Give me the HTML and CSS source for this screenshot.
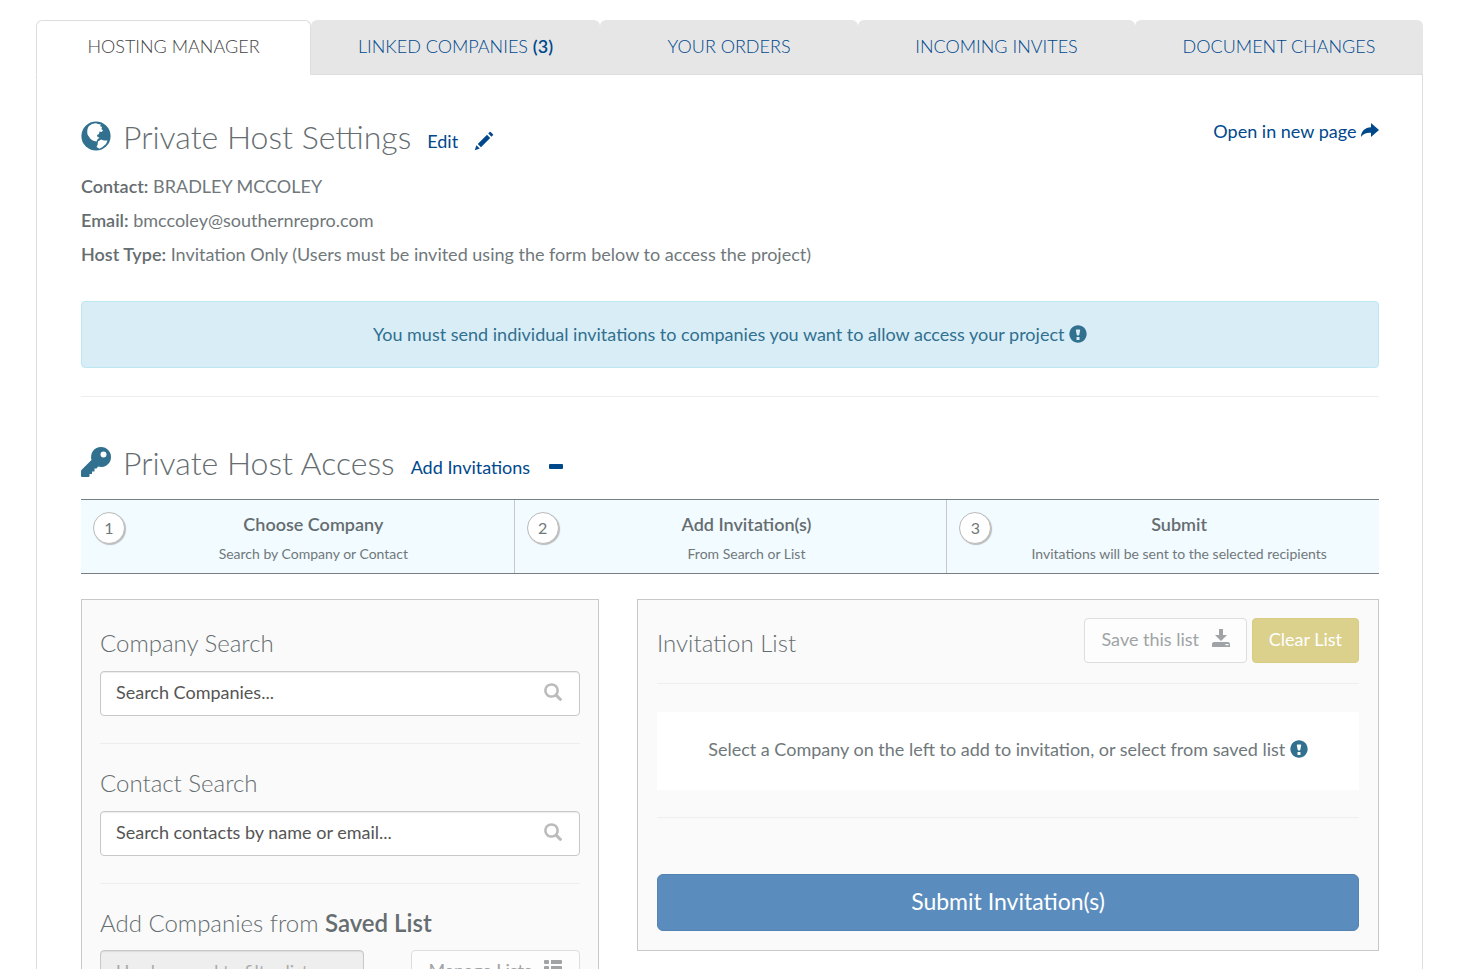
FILE: index.html
```html
<!DOCTYPE html>
<html lang="en">
<head>
    <title>Hosting Manager</title>
    <meta charset="UTF-8">
    <meta name="viewport" content="width=device-width, initial-scale=1.0">
    <link rel="stylesheet" href="styles.css">
</head>
<body>
    <svg class="sprite" aria-hidden="true">
        <symbol id="icon-search" viewBox="0 0 1200 1200">
            <path transform="matrix(1 0 0 -1 0 1200)" d="M500 1191q100 0 191 -39t156.5 -104.5t104.5 -156.5t39 -191l-1 -2l1 -5q0 -141 -78 -262l275 -274q23 -26 22.5 -44.5t-22.5 -42.5l-59 -58q-26 -20 -46.5 -20t-39.5 20l-275 274q-119 -77 -261 -77l-5 1l-2 -1q-100 0 -191 39t-156.5 104.5t-104.5 156.5t-39 191t39 191t104.5 156.5t156.5 104.5t191 39zM500 1022q-88 0 -162 -43t-117 -117t-43 -162t43 -162t117 -117t162 -43t162 43t117 117t43 162t-43 162t-117 117t-162 43z"/>
        </symbol>
        <symbol id="icon-exclamation" viewBox="0 0 1200 1200">
            <path transform="matrix(1 0 0 -1 0 1200)" d="M600 1177q117 0 224 -45.5t184.5 -123t123 -184.5t45.5 -224t-45.5 -224t-123 -184.5t-184.5 -123t-224 -45.5t-224 45.5t-184.5 123t-123 184.5t-45.5 224t45.5 224t123 184.5t184.5 123t224 45.5zM704 900h-208q-20 0 -32 -14.5t-8 -34.5l58 -302q4 -20 21.5 -34.5t37.5 -14.5h54q20 0 37.5 14.5t21.5 34.5l58 302q4 20 -8 34.5t-32 14.5zM675 400h-150q-10 0 -17.5 -7.5t-7.5 -17.5v-150q0 -10 7.5 -17.5t17.5 -7.5h150q10 0 17.5 7.5t7.5 17.5v150q0 10 -7.5 17.5t-17.5 7.5z"/>
        </symbol>
    </svg>

    <div class="container">
        <nav class="tabs">
            <a class="tab active" href="#hosting">HOSTING MANAGER</a>
            <a class="tab" href="#linked">LINKED COMPANIES <b>(3)</b></a>
            <a class="tab" href="#orders">YOUR ORDERS</a>
            <a class="tab" href="#invites">INCOMING INVITES</a>
            <a class="tab" href="#changes">DOCUMENT CHANGES</a>
        </nav>

        <main class="tab-content" id="hosting">
            <div class="section-head">
                <svg class="icon icon-lg" viewBox="0 0 30 30">
                    <circle cx="15" cy="15" r="14.6"/>
                    <path class="land" d="M8 5Q11 2 15 2.200L17 3L20 3.500L19 5L21 6L20.500 8L22 9.500L20.500 11L18.500 10.500L18 13L16 14L16.500 16L18.500 16.500L16.500 18.500L15.500 20.500Q10.500 20 8.500 16.500L6.500 13.500Q5.500 8 8 5ZM17 20.500L20 18.500L23 19.500L26.500 19.500L25 23L21.500 26L18.500 27.800L15.500 26L16.500 24Z"/>
                </svg>
                <h2>Private Host Settings</h2>
                <a class="head-link" href="#edit">Edit
                    <svg class="icon" viewBox="0 0 1200 1200"><path transform="matrix(1 0 0 -1 0 1200)" d="M1011 1210q19 0 33 -13l153 -153q13 -14 13 -33t-13 -33l-99 -92l-214 214l95 96q13 14 32 14zM1013 800l-615 -614l-214 214l614 614zM317 96l-333 -112l110 335z"/></svg>
                </a>
                <a class="open-link" href="#open">Open in new page
                    <svg class="icon" viewBox="0 0 18 18"><path d="M10 1L18 8L10 15V10.800C5.500 10.500 2.500 11.500 0 15C0 9 4 5.500 10 5.200Z"/></svg>
                </a>
            </div>

            <div class="details">
                <p><b>Contact:</b> BRADLEY MCCOLEY</p>
                <p><b>Email:</b> bmccoley@southernrepro.com</p>
                <p><b>Host Type:</b> Invitation Only (Users must be invited using the form below to access the project)</p>
            </div>

            <div class="alert">You must send individual invitations to companies you want to allow access your project
                <svg class="icon"><use href="#icon-exclamation"/></svg>
            </div>

            <hr class="divider">

            <div class="section-head access-head">
                <svg class="icon icon-lg" viewBox="0 0 30 30">
                    <path fill-rule="evenodd" d="M20 0A10 10 0 1 1 17.200 19.600L15.500 21.500H13.500V24.500H11V27H8.500V29Q8.500 30 7.500 30H1Q0 30 0 29V24.500Q0 23.500 0.700 22.800L10.500 13A10 10 0 0 1 20 0ZM22.500 4.500A3 3 0 1 0 22.500 10.500A3 3 0 1 0 22.500 4.500Z"/>
                </svg>
                <h2>Private Host Access</h2>
                <a class="head-link" href="#add">Add Invitations
                    <svg class="icon" viewBox="0 0 18 18"><rect x="2" y="6" width="14" height="5" rx="1"/></svg>
                </a>
            </div>

            <div class="steps">
                <div class="step">
                    <span class="step-number">1</span>
                    <div class="step-text">
                        <b>Choose Company</b>
                        <small>Search by Company or Contact</small>
                    </div>
                </div>
                <div class="step">
                    <span class="step-number">2</span>
                    <div class="step-text">
                        <b>Add Invitation(s)</b>
                        <small>From Search or List</small>
                    </div>
                </div>
                <div class="step">
                    <span class="step-number">3</span>
                    <div class="step-text">
                        <b>Submit</b>
                        <small>Invitations will be sent to the selected recipients</small>
                    </div>
                </div>
            </div>

            <div class="columns">
                <form class="panel search-panel">
                    <label class="panel-title" for="company-search">Company Search</label>
                    <div class="search-box">
                        <input id="company-search" type="text" placeholder="Search Companies...">
                        <svg class="icon"><use href="#icon-search"/></svg>
                    </div>
                    <hr>
                    <label class="panel-title" for="contact-search">Contact Search</label>
                    <div class="search-box">
                        <input id="contact-search" type="text" placeholder="Search contacts by name or email...">
                        <svg class="icon"><use href="#icon-search"/></svg>
                    </div>
                    <hr>
                    <label class="panel-title" for="list-filter">Add Companies from <b>Saved List</b></label>
                    <div class="list-row">
                        <input id="list-filter" type="text" placeholder="Use keyword to filter lists..." disabled>
                        <button class="btn" type="button" disabled>Manage Lists
                            <svg class="icon" viewBox="0 0 18 18"><path d="M1 0H4Q5 0 5 1V3Q5 4 4 4H1Q0 4 0 3V1Q0 0 1 0ZM7 0H17Q18 0 18 1V3Q18 4 17 4H7ZM1 6H4Q5 6 5 7V9Q5 10 4 10H1Q0 10 0 9V7Q0 6 1 6ZM7 6H17Q18 6 18 7V9Q18 10 17 10H7ZM1 12H4Q5 12 5 13V15Q5 16 4 16H1Q0 16 0 15V13Q0 12 1 12ZM7 12H17Q18 12 18 13V15Q18 16 17 16H7Z"/></svg>
                        </button>
                    </div>
                </form>

                <section class="panel list-panel">
                    <div class="list-head">
                        <h3 class="panel-title">Invitation List</h3>
                        <button class="btn" type="button" disabled>Save this list
                            <svg class="icon" viewBox="0 0 18 18"><path fill-rule="evenodd" d="M7 0H11V6H15L9 12L3 6H7ZM1.500 13H16.500L18 14.500V18H0V14.500ZM13.500 15V16.300H16.500V15Z"/></svg>
                        </button>
                        <button class="btn btn-clear" type="button" disabled>Clear List</button>
                    </div>
                    <hr>
                    <p class="empty-list">Select a Company on the left to add to invitation, or select from saved list
                        <svg class="icon"><use href="#icon-exclamation"/></svg>
                    </p>
                    <hr>
                    <button class="btn-submit" type="button">Submit Invitation(s)</button>
                </section>
            </div>
        </main>
    </div>
</body>
</html>
```
FILE: styles.css
```css
:root {
    --text: #70787b;
    --heading: #656d70;
    --link: #00488c;
    --info: #31708f;
    --border: #ddd;
    --panel-border: #c8c8c8;
    --line: #eee;
}

* {
    margin: 0;
    padding: 0;
    box-sizing: border-box;
}

body {
    font-family: Lato, "Open Sans", sans-serif;
    font-size: 18px;
    font-weight: 400;
    line-height: 25px;
    color: var(--text);
    background: #fff;
}

b {
    font-weight: 600;
    color: var(--heading);
}

a {
    color: var(--link);
    text-decoration: none;
}

input,
button {
    font: inherit;
    color: inherit;
}

hr {
    border: 0;
    border-top: 1px solid var(--line);
}

.sprite {
    display: none;
}

.icon {
    width: 18px;
    height: 18px;
    fill: currentColor;
    overflow: visible;
    vertical-align: -2px;
}

.icon-lg {
    width: 30px;
    height: 30px;
    margin-bottom: 2px;
    color: var(--info);
}

.land {
    fill: #fff;
}

.container {
    margin: 20px 39px 0 36px;
}

/* tabs */
.tabs {
    display: grid;
    grid-template-columns: 275fr 289fr 258fr 277fr 288fr;
}

.tab {
    height: 55px;
    padding-top: 14px;
    font-weight: 300;
    text-align: center;
    background: #e6e6e6;
    border-bottom: 1px solid var(--border);
    border-radius: 6px 6px 0 0;
}

.tab b {
    color: inherit;
}

.tab.active {
    color: #444;
    background: #fff;
    border: 1px solid var(--border);
    border-bottom-color: transparent;
    padding-top: 13px;
}

.tab-content {
    padding: 40px 43px 40px 44px;
    border: 1px solid var(--border);
    border-top: 0;
}

/* section headings */
.section-head {
    display: flex;
    align-items: center;
}

.section-head h2 {
    margin-left: 12px;
    font-size: 32px;
    font-weight: 300;
    line-height: 44px;
    color: var(--heading);
}

.head-link {
    margin: 8px 0 0 16px;
}

.head-link .icon {
    margin-left: 12px;
}

.open-link {
    margin: 0 0 12px auto;
}

.details {
    margin-top: 10px;
    line-height: 34px;
}

.alert {
    margin-top: 30px;
    padding: 20px;
    text-align: center;
    color: var(--info);
    background: #d9edf7;
    border: 1px solid #bce8f1;
    border-radius: 4px;
}

.divider {
    margin-top: 28px;
}

.access-head {
    margin-top: 44px;
}

/* steps */
.steps {
    display: grid;
    grid-template-columns: repeat(3, 1fr);
    margin-top: 14px;
    background: #f2fbff;
    border-top: 1px solid #777f82;
    border-bottom: 1px solid #777f82;
}

.step {
    display: flex;
    padding: 12px 12px 9px;
}

.step + .step {
    border-left: 1px solid var(--panel-border);
}

.step-number {
    width: 32px;
    height: 32px;
    font-size: 16px;
    line-height: 30px;
    text-align: center;
    background: #fff;
    border: 1px solid #bbb;
    border-radius: 50%;
    box-shadow: 1px 1px 1px #bbb;
}

.step-text {
    flex: 1;
    text-align: center;
}

.step-text b,
.step-text small {
    display: block;
}

.step-text small {
    margin-top: 7px;
    font-size: 14px;
    line-height: 20px;
}

/* panels */
.columns {
    display: grid;
    grid-template-columns: 518fr 742fr;
    gap: 38px;
    align-items: start;
    margin-top: 25px;
}

.panel {
    padding: 18px;
    background: #fafafa;
    border: 1px solid var(--panel-border);
}

.search-panel {
    padding-top: 26px;
}

.list-panel {
    padding: 18px 19px 19px;
}

.panel-title {
    display: block;
    font-size: 24px;
    font-weight: 300;
    line-height: 34px;
    color: var(--heading);
}

.panel input {
    width: 100%;
    height: 45px;
    padding: 0 15px 4px;
    color: #555;
    background: #fff;
    border: 1px solid var(--panel-border);
    border-radius: 4px;
    box-shadow: inset 0 1px 1px rgba(0, 0, 0, 0.08);
}

.panel input::placeholder {
    color: inherit;
    opacity: 1;
}

.panel input:disabled {
    color: #aaa;
    background: #eee;
}

.search-box {
    position: relative;
    margin-top: 11px;
}

.search-box .icon {
    position: absolute;
    top: 12px;
    right: 18px;
    color: #bbb;
}

.search-panel hr {
    margin: 27px 0 22px;
}

.list-row {
    display: grid;
    grid-template-columns: 264fr 169fr;
    gap: 47px;
    margin-top: 10px;
}

.btn {
    height: 45px;
    padding: 0 16px 2px;
    color: #a0a4a6;
    background: #fdfdfd;
    border: 1px solid var(--border);
    border-radius: 4px;
    white-space: nowrap;
}

.btn .icon {
    margin-left: 8px;
    vertical-align: -1px;
}

.list-row .btn {
    padding: 0 15px 4px;
}

.btn-clear {
    color: #fff;
    background: #dbd08c;
    border-color: #d8cc83;
}

.list-head {
    display: flex;
    align-items: center;
    gap: 5px;
    margin-bottom: 20px;
}

.list-head .panel-title {
    margin: 4px auto 0 0;
}

.empty-list {
    margin: 28px 0 27px;
    padding: 25px 25px 28px;
    text-align: center;
    background: #fff;
}

.empty-list .icon {
    color: var(--info);
}

.btn-submit {
    width: 100%;
    height: 57px;
    margin-top: 56px;
    padding-bottom: 2px;
    font-size: 23px;
    color: #fff;
    background: #5a8dbd;
    border: 1px solid #5283b3;
    border-radius: 6px;
}
```
